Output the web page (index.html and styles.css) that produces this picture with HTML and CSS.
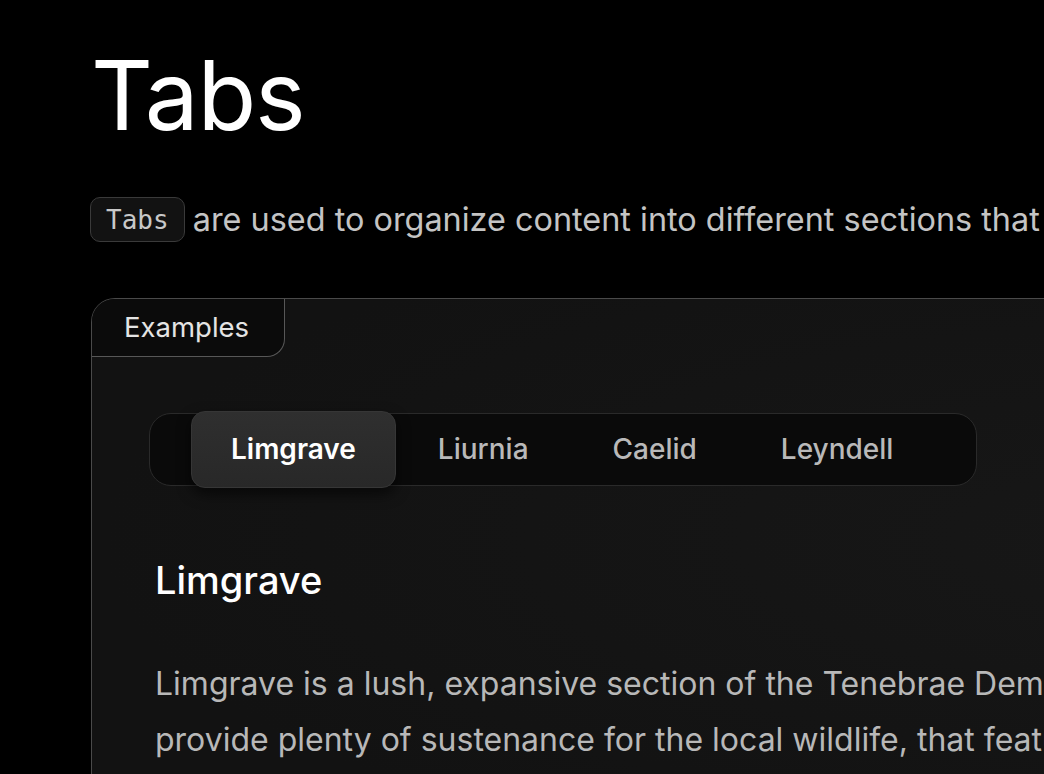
FILE: index.html
```html
<!DOCTYPE html>
<html lang="en">
<head>
<meta charset="utf-8">
<title>Tabs</title>
<link rel="stylesheet" href="styles.css">
</head>
<body>
<main class="page">
  <h1 class="title">Tabs</h1>
  <p class="intro"><code class="code-pill">Tabs</code> are used to organize content into different sections that users can switch between without leaving the page.</p>

  <section class="example-card">
    <div class="card-label">Examples</div>
    <div class="card-body">
      <div class="tab-list" role="tablist">
        <button class="tab active" role="tab">Limgrave</button>
        <button class="tab" role="tab">Liurnia</button>
        <button class="tab" role="tab">Caelid</button>
        <button class="tab" role="tab">Leyndell</button>
      </div>
      <div class="tab-panel">
        <h2 class="panel-title">Limgrave</h2>
        <p class="panel-text">Limgrave is a lush, expansive section of the Tenebrae Demesne, whose fields and forests<br>provide plenty of sustenance for the local wildlife, that features roaming beasts and soldiers.</p>
      </div>
    </div>
  </section>
</main>
</body>
</html>
```
FILE: styles.css
```css
html, body {
  margin: 0;
  padding: 0;
  background: #000;
  overflow: hidden;
}

body {
  font-family: "Inter", "Noto Sans", sans-serif;
  color: #fff;
}

.page {
  width: 1800px;
  padding: 38px 0 0 91px;
}

.title {
  margin: 0;
  font-size: 96px;
  line-height: 1.2;
  font-weight: 400;
  letter-spacing: -1.2px;
  color: #fff;
}

.intro {
  margin: 44px 0 0;
  font-size: 32.4px;
  line-height: 45px;
  color: #c4c4c4;
  white-space: nowrap;
}

.code-pill {
  display: inline-block;
  box-sizing: border-box;
  height: 45px;
  padding: 0 15px;
  margin-left: -1px;
  margin-right: -1px;
  vertical-align: top;
  font-family: "DejaVu Sans Mono", "Liberation Mono", monospace;
  font-size: 26px;
  line-height: 45px;
  font-weight: 400;
  color: #c8c8c8;
  background: #121212;
  border: 1px solid #3a3a3a;
  border-radius: 10px;
}

.example-card {
  margin-top: 56px;
  border: 1.5px solid #4a4a4a;
  border-right: none;
  border-bottom: none;
  border-top-left-radius: 24px;
  background: radial-gradient(ellipse at 60% 40%, #171717 0%, #121212 70%);
  min-height: 600px;
}

.card-label {
  display: inline-block;
  box-sizing: border-box;
  width: 193px;
  height: 58px;
  padding-left: 32px;
  font-size: 27.5px;
  line-height: 57px;
  color: #e4e4e4;
  background: #0b0b0b;
  border-right: 1.5px solid #575757;
  border-bottom: 1.5px solid #575757;
  border-top-left-radius: 22px;
  border-bottom-right-radius: 18px;
}

.card-body {
  padding: 56px 0 0 57px;
}

.tab-list {
  display: inline-flex;
  box-sizing: border-box;
  height: 73px;
  padding: 0 41px;
  background: #0a0a0a;
  border: 1px solid #2a2a2a;
  border-radius: 22px;
}

.tab {
  margin: -3px 0;
  padding: 0 41px;
  font-family: inherit;
  font-size: 28px;
  line-height: 71px;
  font-weight: 500;
  color: #b9b9b9;
  background: none;
  border: 1px solid transparent;
  border-radius: 14px;
  cursor: pointer;
}

.tab.active {
  padding: 0 39px;
  font-weight: 600;
  color: #fff;
  background: linear-gradient(180deg, #2f2f2f 0%, #282828 100%);
  border-color: #363636;
  box-shadow: 0 6px 14px rgba(0, 0, 0, 0.6);
}

.tab-panel {
  padding: 72px 0 0 6px;
}

.panel-title {
  margin: 0;
  font-size: 38px;
  line-height: 1.2;
  font-weight: 500;
  color: #fff;
}

.panel-text {
  margin: 52px 0 0;
  font-size: 32px;
  line-height: 56px;
  color: #b8b8b8;
  white-space: nowrap;
}
```
